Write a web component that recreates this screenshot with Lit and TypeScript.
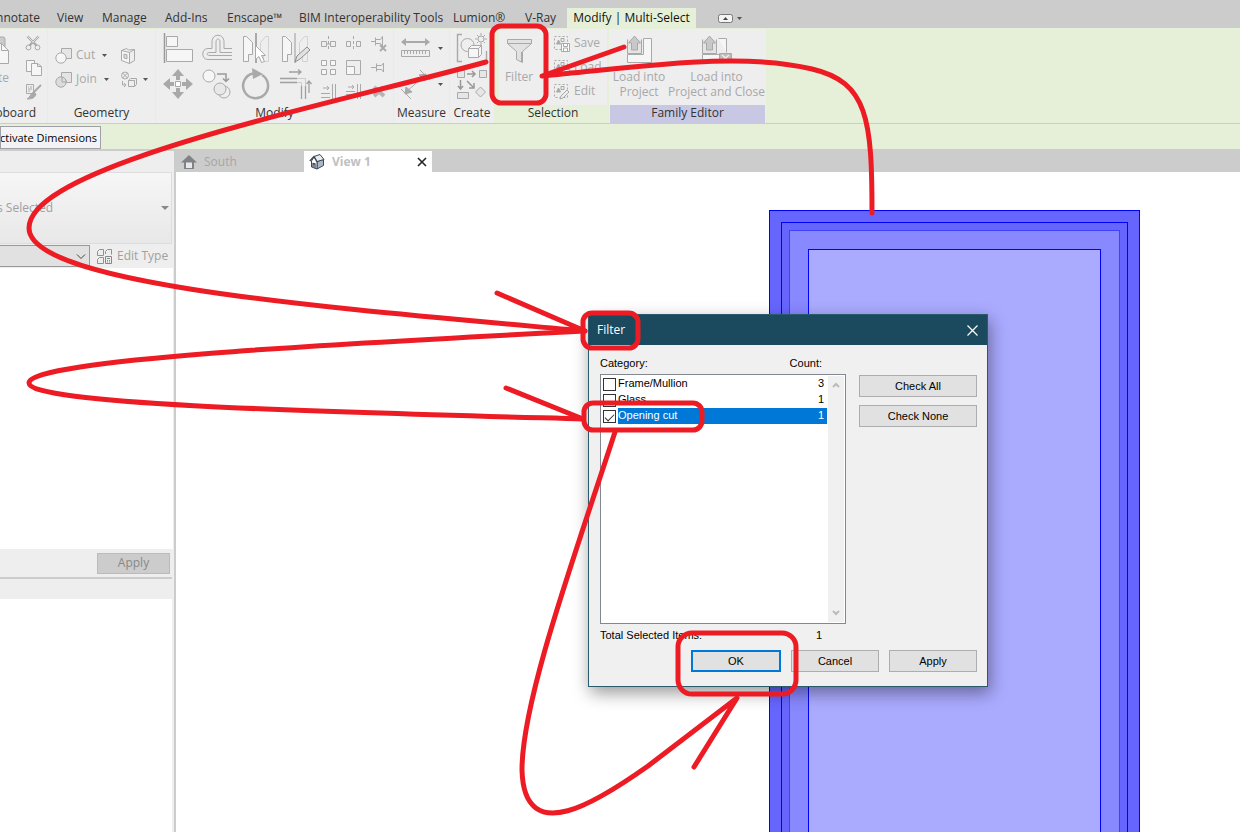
import { LitElement, html, css, svg } from "lit";
import { customElement } from "lit/decorators.js";

const G = "#a9a9a9";
const icon = (w: number, h: number, body: unknown, cls = "") =>
  html`<svg class="ic ${cls}" width=${w} height=${h} viewBox="0 0 ${w} ${h}" fill="none" stroke=${G} aria-hidden="true">${body}</svg>`;

const caret = html`<svg class="ic" width="5" height="3" viewBox="0 0 5 3" aria-hidden="true"><path d="M0 0h5L2.500 3z" fill="#555"/></svg>`;

const paper = "#f6f6f6";
const I = {
  paste: icon(28, 32, svg`<rect x="4" y="4" width="20" height="22" rx="2" fill="#ccc"/><path d="M12.500 10.500h8l7 7v13h-15z" fill="${paper}"/><path d="M20.500 10.500v7h7"/>`),
  scissors: icon(16, 16, svg`<path d="M2.500 1.500l9 9M13.500 1.500l-9 9" stroke-width="2.400"/><path d="M2.500 1.500l6 6M13.500 1.500l-6 6" stroke="#eee" stroke-width=".8"/><circle cx="3.500" cy="12.500" r="2.400"/><circle cx="12.500" cy="12.500" r="2.400"/>`),
  copy: icon(17, 17, svg`<path d="M1.500 1.500h8v11h-8z" fill="${paper}"/><path d="M6.500 4.500h6l4 3v9h-10z" fill="${paper}"/><path d="M12.500 4.500v3h4"/>`),
  match: icon(17, 17, svg`<path d="M1.500 1.500h7v9h-7z"/><path d="M3 4h1M5 4h2M3 6h4M3 8h2"/><path d="M16 2l-7 7" stroke-width="2"/><path d="M9 9c-4 1-3 5-7 7 5 0 8-1 9-5z" fill="${G}"/>`),
  cut: icon(17, 17, svg`<path d="M6.500 1.500h10v10h-10z" fill="#e6e6e6"/><circle cx="6" cy="11" r="5.200" fill="${paper}"/>`),
  join: icon(17, 17, svg`<path d="M6.500 1.500h10v10h-5a5 5 0 0 0-5-5z" fill="#e4e4e4"/><circle cx="6" cy="11" r="5.200" fill="#dcdcdc"/><path d="M7 6v5h5"/>`),
  wall: icon(16, 17, svg`<path d="M1.500 3.500l8 2v11l-8-3z" fill="${paper}"/><path d="M9.500 5.500l5-3v11l-5 3M1.500 3.500l5-2 2 1.500 6-.5"/><path d="M4 7l3 .8v4L4 11z" fill="#ddd"/>`),
  demolish: icon(17, 17, svg`<circle cx="5" cy="4.500" r="3.500"/><path d="M2.500 2l5 5M7.500 2l-5 5M8.500 9.500h6v6h-6zM8.500 9.500l2-2h6v6l-2 2M2.500 10v4h3M4 12l2 2-2 2"/>`),
  align: icon(32, 32, svg`<path d="M2.500 1v30" stroke-width="1.500" stroke="#999"/><path d="M4.500 4.500h11v10h-11zM4.500 17.500h26v12h-26z" fill="${paper}"/>`),
  offset: icon(32, 32, svg`<path d="M31 27.500H7c-7 0-7-11 0-11h4V10c0-9 12-9 12 0v6.500h8"/><path d="M31 23.500H9c-4 0-4-3 0-3h6V10c0-4 4-4 4 0v10.500h12"/>`),
  mirror: icon(32, 32, svg`<path d="M3.500 4.500h3l6 6v12h-4v7h-5z" fill="${paper}"/><path d="M28.500 4.500h-3l-5 6v12h3v7h5z" stroke="#d2d2d2"/><path d="M16 1v30" stroke-width="2"/><path d="M15.500 13.500v14l3.500-3 2.500 6 3-1-3-6h4z" fill="#fff"/>`),
  mirrorDraw: icon(32, 32, svg`<path d="M3.500 4.500h3l6 6v12h-4v7h-5z" fill="${paper}"/><path d="M28.500 4.500h-3l-5 6v12h3v7h5z" stroke="#d2d2d2"/><path d="M16 1v30" stroke-width="2" stroke="#c4c4c4"/><path d="M16 30l2-6 10-9 3 3-10 9z" fill="#e2e2e2" stroke="#8c8c8c"/>`),
  move: icon(32, 32, svg`<path d="M16 1l6 7h-4v4h-4V8h-4zM16 31l6-7h-4v-4h-4v4h-4zM1 16l7-6v4h4v4H8v4zM31 16l-7-6v4h-4v4h4v4z" fill="${G}" stroke="none"/><path d="M13.500 13.500h5v5h-5z" fill="#fff"/>`),
  copyTool: icon(32, 32, svg`<circle cx="8" cy="8" r="6" fill="${paper}"/><path d="M16 6h9v7M22 10.500l3 3 3-3" stroke="#999" stroke-width="1.500"/><circle cx="23" cy="24" r="6"/><circle cx="19" cy="21" r="6" fill="#e8e8e8"/>`),
  rotate: icon(32, 32, svg`<path d="M22 7A12.500 12.500 0 1 1 13 5.500" stroke-width="2.500"/><path d="M12 0l11 6-10 5z" fill="${G}" stroke="none"/>`),
  trim: icon(32, 32, svg`<path d="M1 10.500h17M1 14.500h17M22.500 18v13M26.500 18v13M10 4h12M19 1.500l3 2.500-3 2.500M30 25V13M27.500 16l2.500-3 2.500 3" stroke="#a0a0a0" stroke-width="1.300"/><path d="M18 10.500h8.500V18M18 14.500h4.500V18" stroke="#ccc"/>`),
  split: icon(17, 17, svg`<path d="M1.500 6.500h5v5h-5zM10.500 6.500h5v5h-5zM6.500 9h4"/><path d="M8.500 1v15" stroke-dasharray="3 2"/>`),
  splitGap: icon(17, 17, svg`<path d="M1.500 6.500h4v5h-4zM11.500 6.500h4v5h-4z"/><path d="M8.500 1v15" stroke-dasharray="3 2"/>`),
  unpin: icon(17, 17, svg`<path d="M1 6.500h4M5.500 2.500v8M5.500 4.500h5l2-3v10l-2-3h-5"/><path d="M10 10l6 6M16 10l-6 6" stroke-width="1.800"/>`),
  array: icon(17, 17, svg`<path d="M1.500 1.500h5v5h-5zM10.500 1.500h5v5h-5zM1.500 10.500h5v5h-5zM10.500 10.500h5v5h-5z" fill="${paper}"/>`),
  scale: icon(17, 17, svg`<path d="M1.500 7V1.500h14v14H10"/><path d="M1.500 7.500h8v8h-8z" fill="${paper}"/>`),
  pin: icon(17, 17, svg`<path d="M1 8.500h5M6.500 4.500v8M6.500 6.500h5l2-2.500v9l-2-2.500h-5"/>`),
  extend: icon(17, 17, svg`<path d="M1 10.500h9M1 14.500h9M12.500 1v15M15.500 1v15M3 5h6M7 3l2 2-2 2"/>`),
  extendMulti: icon(17, 17, svg`<path d="M1 8.500h9M1 11.500h9M1 14.500h9M12.500 1v15M15.500 1v15M3 4h6M7 2l2 2-2 2"/>`),
  del: icon(17, 17, svg`<path d="M4 4l10 9M14 4L4 13" stroke-width="4" stroke="#b4b4b4"/>`),
  measure: icon(31, 20, svg`<path d="M2 4h27" stroke-width="2"/><path d="M1 4l5-4v8zM30 4l-5-4v8z" fill="${G}" stroke="none"/><path d="M1.500 12.500h28v6h-28z"/><path d="M4.500 13v3M7.500 13v3M10.500 13v3M13.500 13v3M16.500 13v3M19.500 13v3M22.500 13v3M25.500 13v3"/>`),
  dimension: icon(31, 31, svg`<path d="M1 20l10 10M20 1l10 10M5 24L25 6" /><path d="M5 25l1-7 6 5zM26 5l-7 1 6 6z" fill="${G}"/>`),
  group: icon(32, 30, svg`<path d="M6 1.500H1.500v27H6M26 28.500h4.500V18" stroke-width="1.400"/><circle cx="11.500" cy="12" r="6.500"/><path d="M12.500 15.500l3-3h10v9l-3 3h-10z" fill="${paper}"/><path d="M12.500 15.500h10v9M22.500 15.500l3-3"/><circle cx="25" cy="6" r="3"/><path d="M25 0v12M19 6h12M21 2l8 8M29 2l-8 8" stroke-dasharray="2.500 7"/>`),
  assembly: icon(32, 32, svg`<path d="M1.500 2.500h7v7h-7zM23.500 2.500h7v7h-7zM1.500 24.500h11v6h-11zM24.500 19l5 5-5 5-5-5z" fill="#e6e6e6"/><path d="M11 6h8M16 3l3 3-3 3M4.500 12v9M2 18l2.500 3L7 18M11 13l7 7M18 15v5h-5" stroke="#999" stroke-width="1.500"/>`),
  filter: icon(27, 26, svg`<path d="M1.500 1.500h24v4l-9 8v11l-6-3v-8l-9-8z" fill="#e2e2e2"/><path d="M1.500 5.500h24M15.500 14v10" />`),
  save: icon(17, 17, svg`<path d="M1.500 1.500h13v13h-13z" stroke-dasharray="2 2"/><path d="M8 3.500h3v3H8z"/><path d="M3.500 9l2-4 2 4z" fill="${G}"/><path d="M8.500 8.500h8v8h-8z" fill="#fff"/><path d="M10.500 8.500v3h4v-3M10.500 16v-3h4v3"/>`),
  load: icon(17, 17, svg`<path d="M1.500 1.500h13v13h-13z" stroke-dasharray="2 2"/><path d="M8 3.500h3v3H8z"/><path d="M3.500 9l2-4 2 4z" fill="${G}"/><path d="M7.500 9.500h3l1 1h5v6h-9z" fill="#fff"/>`),
  edit: icon(17, 17, svg`<path d="M1.500 1.500h13v13h-13z" stroke-dasharray="2 2"/><path d="M8 3.500h3v3H8z"/><path d="M3.500 9l2-4 2 4z" fill="${G}"/><path d="M7 16l1-3 6-6 2 2-6 6z" fill="#eee"/>`),
  toProject: icon(27, 28, svg`<path d="M17.500 3.500h8v24h-24v-8h16z" fill="${paper}"/><path d="M1.500 4.500v14h14v-14" fill="#e4e4e4"/><path d="M8.500 1l6 7h-3v7h-6V8h-3z" fill="#c8c8c8"/>`),
  toProjectClose: icon(32, 28, svg`<path d="M17.500 3.500h8v14M1.500 19.500v8h17v-8z" fill="${paper}"/><path d="M1.500 4.500v14h14v-14" fill="#e4e4e4"/><path d="M8.500 1l6 7h-3v7h-6V8h-3z" fill="#c8c8c8"/><path d="M18.500 18.500h12v9h-12z" fill="#bcbcbc"/><path d="M21 20l7 6M28 20l-7 6" stroke="#eee" stroke-width="1.500"/>`),
  editType: icon(17, 17, svg`<path d="M3.500 1.500h4v6h-6v-4zM11.500 1.500h4v5M9.500 6V3.500l2-2M3.500 9.500h4v6h-6v-4z" stroke="#909090"/><path d="M9.500 8.500h6v7h-6z" stroke="#888"/><path d="M11 10.500h3M11 12.500h1M13 12.500h1M11 14h1M13 14h1" stroke="#888"/>`),
  home: html`<svg class="ic" width="16" height="15" viewBox="0 0 16 15" aria-hidden="true"><path d="M8 0l8 7.500h-3V14H3V7.500H0z" fill="#808285"/><path d="M5 7.500h6v5.500H5z" fill="#e6e8ea"/></svg>`,
  view3d: html`<svg class="ic" width="16" height="16" viewBox="0 0 16 16" fill="#fff" stroke="#3d4755" stroke-linejoin="round" aria-hidden="true"><path d="M8 7.500l6.500-2v6L8 15z" fill="#a9b8c8"/><path d="M2.500 7v6L8 15V7L5 3z"/><path d="M5 2.500l6-2 4 5-7 2z" fill="#e8edf2"/><path d="M.8 7L5 2.500 8 8M4 13V9.500l2 .5v4" fill="none" stroke-width="1.300"/></svg>`,
};

@customElement("filter-dialog")
export class FilterDialog extends LitElement {
  rows = [
    { name: "Frame/Mullion", count: 3, on: false },
    { name: "Glass", count: 1, on: false },
    { name: "Opening cut", count: 1, on: true },
  ];
  static styles = css`
    :host { display: block; box-sizing: border-box; border: 1px solid #2a5a6b; background: #f0f0f0; color: #000;
      box-shadow: 2px 6px 16px rgba(0, 0, 0, .4); font: 11px/16px "Liberation Sans", sans-serif; }
    header { display: flex; align-items: center; justify-content: space-between; height: 30px; padding: 0 9px 0 8px;
      background: #1b4a5e; color: #fff; }
    h2 { margin: 0; font: 12px/16px "Open Sans", "Noto Sans", sans-serif; }
    button { font: inherit; color: inherit; padding: 0; height: 22px; background: #e1e1e1; border: 1px solid #adadad; }
    .close { display: grid; place-items: center; width: 12px; background: none; border: 0; }
    .body { display: grid; grid-template-columns: 1fr 118px; column-gap: 13px; padding: 10px 10px 14px 11px; }
    .heads { display: flex; justify-content: space-between; padding-right: 24px; margin-bottom: 3px; }
    .list { display: flex; box-sizing: border-box; height: 250px; border: 1px solid #828790; background: #fff; }
    .rows { flex: 1; padding: 1px 0 0 2px; }
    .row { display: flex; align-items: center; height: 16px; }
    .name { display: flex; flex: 1; justify-content: space-between; padding: 0 3px 0 0; margin: 0 1px 0 2px; height: 16px; line-height: 15px; }
    .sel .name { background: #0078d7; color: #fff; }
    input { appearance: none; display: grid; place-items: center; box-sizing: border-box; width: 13px; height: 13px; margin: 1px 0 0; border: 1px solid #333; background: #fff; }
    input:checked::after { content: ""; box-sizing: border-box; width: 9px; height: 5px; border: solid #333; border-width: 0 0 1px 1px; transform: rotate(-45deg); }
    .bar { display: flex; flex-direction: column; justify-content: space-between; align-items: center; box-sizing: border-box;
      width: 16px; margin: 1px 1px 1px 0; padding: 6px 0; background: #f0f0f0; }
    .side { display: flex; flex-direction: column; gap: 8px; padding-top: 20px; }
    .total { display: flex; justify-content: space-between; padding-right: 24px; margin: 3px 0 7px; }
    .foot { grid-column: 1 / -1; display: grid; grid-template-columns: 90px 88px 88px; justify-content: end; gap: 10px; }
    .ok { border: 2px solid #0078d7; }
  `;
  render() {
    const chev = (d: string) => html`<svg width="8" height="6" viewBox="0 0 8 6" fill="none" stroke="#bbb" stroke-width="2" aria-hidden="true"><path d=${d}/></svg>`;
    return html`
      <header><h2>Filter</h2>
        <button class="close" aria-label="Close"><svg width="11" height="11" viewBox="0 0 11 11" stroke="#fff" stroke-width="1.200"><path d="M.5 .5l10 10M10.500 .5l-10 10"/></svg></button>
      </header>
      <div class="body">
        <div>
          <div class="heads"><span>Category:</span><span>Count:</span></div>
          <div class="list">
            <div class="rows">${this.rows.map((r, i) => html`
              <div class="row ${r.on ? "sel" : ""}"><input type="checkbox" id="r${i}" .checked=${r.on}>
                <label class="name" for="r${i}"><span>${r.name}</span><span>${r.count}</span></label></div>`)}
            </div>
            <div class="bar">${chev("M1 5l3-3 3 3")}${chev("M1 1l3 3 3-3")}</div>
          </div>
          <div class="total"><span>Total Selected Items:</span><span>1</span></div>
        </div>
        <div class="side"><button>Check All</button><button>Check None</button></div>
        <div class="foot"><button class="ok">OK</button><button>Cancel</button><button>Apply</button></div>
      </div>`;
  }
}

@customElement("app-root")
export class AppRoot extends LitElement {
  static styles = css`
    :host { display: flex; flex-direction: column; position: relative; height: 100vh; overflow: hidden; background: #fff;
      color: #333; font: 12px/16px "Open Sans", "Noto Sans", sans-serif; }
    .ic { display: block; flex: none; overflow: visible; }
    button { display: flex; align-items: center; padding: 0; border: 0; background: none; font: inherit; color: inherit; }
    .tabs { display: grid; grid-template-columns: 57px 45px 63px 62px 72px 154px 72px 42px 129px 1fr; align-items: end; height: 28px; background: #ccc; }
    .tabs a { box-sizing: border-box; height: 20px; line-height: 20px; color: #333; text-decoration: none; white-space: nowrap; }
    .cut { display: flex; justify-content: flex-end; overflow: hidden; }
    .tabs .first { width: 40px; }
    .tabs .on { background: #e6f0d8; text-align: center; color: #111; }
    .mini { gap: 4px; height: 20px; margin-left: 22px; }
    .ribbon { display: flex; height: 94px; padding-top: 1px; background: #e6f0d8; border-bottom: 1px solid #ccc; }
    .grp { display: flex; flex-direction: column; flex: none; box-sizing: border-box; margin-right: 1px; background: #eee; }
    .grp h3 { margin: 0; height: 18px; font: inherit; text-align: center; white-space: nowrap; }
    .in { flex: 1; display: flex; color: #a8a8a8; }
    .clip { width: 47px; } .geo { width: 107px; } .mod { width: 237px; } .mea { width: 55px; } .cre { width: 44px; margin-right: 5px; }
    .clip h3 { width: 36px; }
    .sel { width: 108px; margin-right: 2px; } .sel h3 { background: #e6f0d8; }
    .fam { width: 157px; } .fam h3 { background: #c8c8e4; margin: 0 1px; }
    .paste { flex-direction: column; justify-content: space-between; align-items: flex-end; width: 9px; padding: 4px 0 19px; margin-right: 16px; overflow: hidden; box-sizing: border-box; }
    .col { display: grid; grid-auto-rows: 24px; align-items: center; padding-top: 2px; align-content: start; }
    .gcol { padding: 14px 0 0 7px; width: 57px; margin-right: 8px; }
    .gcol button { gap: 4px; } .gcol2 button { gap: 6px; } .gcol .ic:last-child { margin-left: 3px; }
    .gcol2 { padding-top: 14px; }
    .big { display: grid; grid-template: repeat(2, 36px) / repeat(4, 39px); place-items: center; padding: 1px 2px; align-content: start; }
    .small { display: grid; grid-template: repeat(3, 24px) / repeat(3, 25px); place-items: center; padding-top: 2px; align-content: start; }
    .two { display: grid; grid-auto-rows: 36px; align-items: center; align-content: start; padding: 1px 6px; }
    .two button { gap: 7px; }
    .stack { flex-direction: column; text-align: center; line-height: 15px; justify-content: flex-start; }
    .flt { width: 40px; gap: 5px; padding-top: 9px; margin-right: 14px; }
    .sel .col button { gap: 4px; }
    .ld { gap: 6px; padding-top: 6px; } .ld1 { width: 60px; } .ld2 { width: 95px; white-space: nowrap; }
    .options { display: flex; height: 27px; background: #e6f0d8; border-bottom: 2px solid #ccc; box-sizing: border-box; }
    .act { box-sizing: border-box; width: 101px; height: 23px; margin-top: 2px; padding-right: 3px; border: 1px solid #a0a0a8; background: #f3f3f6; color: #000; font-size: 11px; white-space: nowrap; }
    .main { flex: 1; display: flex; min-height: 0; }
    aside { display: flex; flex-direction: column; box-sizing: border-box; padding-right: 2px; flex: none; background: #eee; border-right: 2px solid #ccc; width: 176px; color: #a0a0a0; }
    .type { box-sizing: border-box; width: 172px; height: 72px; margin-top: 21px; justify-content: space-between; padding-right: 2px; border: 1px solid #ddd; border-left: 0; background: linear-gradient(#f6f6f6, #e8e8e8); }
    .type span { width: 53px; white-space: nowrap; }
    .pick { display: flex; height: 24px; gap: 6px; align-items: center; }
    .drop { display: grid; align-items: center; justify-items: end; padding-right: 0; }
    .drop > * { grid-area: 1 / 1; }
    .drop .ic { margin-right: 5px; pointer-events: none; }
    .pick select { appearance: none; box-sizing: border-box; width: 90px; height: 22px; border: 1px solid #999; border-left: 0; background: #e1e1e1; }
    .pick button { gap: 4px; }
    .sheet { background: #fff; height: 281px; margin-right: -1px; }
    .applyrow { display: flex; justify-content: flex-end; align-items: center; height: 28px; padding-right: 2px; }
    .applyrow button { width: 73px; height: 21px; box-sizing: border-box; justify-content: center; background: #ccc; border: 1px solid #bbb; color: #888; }
    .head { height: 20px; border-top: 2px solid #ccc; }
    .rest { flex: 1; background: #fff; }
    .view { flex: 1; display: flex; flex-direction: column; min-width: 0; }
    .vtabs { display: flex; height: 21px; background: #ccc; color: #a6a6a6; }
    .vtab { display: flex; align-items: center; gap: 7px; box-sizing: border-box; width: 128px; padding: 1px 5px 0; }
    .vtab a { flex: 1; color: inherit; text-decoration: none; }
    .vtab.on { background: #fff; font-weight: 700; color: #c0c0c0; }
    .canvas { flex: 1; display: flex; justify-content: flex-end; padding: 38px 100px 0 0; min-height: 0; }
    .f { display: flex; box-sizing: border-box; border: 1px solid #00f; border-bottom: 0; flex: 1; }
    .f1 { flex: none; width: 371px; padding: 11px 11px 0; background: #66f; }
    .f2 { padding: 7px 7px 0; } .f3 { padding: 18px 18px 0; background: #88f; border-color: #4040ff; } .f4 { background: #aaf; }
    filter-dialog { position: absolute; left: 588px; top: 314px; width: 400px; }
    .ink { position: absolute; left: 0; top: 0; pointer-events: none; }
  `;
  render() {
    return html`
      <nav class="tabs">
        <a class="cut first" href="#">Annotate</a>
        ${["View", "Manage", "Add-Ins", "Enscape™", "BIM Interoperability Tools", "Lumion®", "V-Ray"].map((t) => html`<a href="#">${t}</a>`)}
        <a class="on" href="#">Modify | Multi-Select</a>
        <button class="mini" aria-label="Ribbon display"><svg class="ic" width="15" height="9" viewBox="0 0 15 9"><rect x=".5" y=".5" width="14" height="8" rx="2" fill="#f4f4f4" stroke="#777"/><path d="M5 6h5L7.500 3z" fill="#444"/></svg>${caret}</button>
      </nav>
      <div class="ribbon">
        <section class="grp clip"><div class="in"><button class="cut paste">${I.paste}<span>Paste</span></button>
          <div class="col">${I.scissors}${I.copy}${I.match}</div></div><h3 class="cut">Clipboard</h3></section>
        <section class="grp geo"><div class="in">
          <div class="col gcol"><button>${I.cut}<span>Cut</span>${caret}</button><button>${I.join}<span>Join</span>${caret}</button></div>
          <div class="col gcol2"><button aria-label="Wall joins">${I.wall}</button><button aria-label="Demolish">${I.demolish}${caret}</button></div></div><h3>Geometry</h3></section>
        <section class="grp mod"><div class="in">
          <div class="big">${I.align}${I.offset}${I.mirror}${I.mirrorDraw}${I.move}${I.copyTool}${I.rotate}${I.trim}</div>
          <div class="small">${I.split}${I.splitGap}${I.unpin}${I.array}${I.scale}${I.pin}${I.extend}${I.extendMulti}${I.del}</div></div><h3>Modify</h3></section>
        <section class="grp mea"><div class="in two"><button aria-label="Measure between">${I.measure}${caret}</button><button aria-label="Dimension">${I.dimension}${caret}</button></div><h3>Measure</h3></section>
        <section class="grp cre"><div class="in two"><button aria-label="Create group">${I.group}</button><button aria-label="Create assembly">${I.assembly}</button></div><h3>Create</h3></section>
        <section class="grp sel"><div class="in"><button class="stack flt">${I.filter}<span>Filter</span></button>
          <div class="col"><button>${I.save}Save</button><button>${I.load}Load</button><button>${I.edit}Edit</button></div></div><h3>Selection</h3></section>
        <section class="grp fam"><div class="in"><button class="stack ld ld1">${I.toProject}<span>Load into<br>Project</span></button>
          <button class="stack ld ld2">${I.toProjectClose}<span>Load into<br>Project and Close</span></button></div><h3>Family Editor</h3></section>
      </div>
      <div class="options"><button class="cut act">Activate Dimensions</button></div>
      <div class="main">
        <aside>
          <button class="type"><span class="cut">Multiple Categories Selected</span><svg class="ic" width="8" height="4" viewBox="0 0 8 4"><path d="M0 0h8L4 4z" fill="#888"/></svg></button>
          <div class="pick"><div class="drop"><select aria-label="Category"><option></option></select>
            <svg class="ic" width="8" height="5" viewBox="0 0 8 5" fill="none" stroke="#444" aria-hidden="true"><path d="M0 .5l4 4 4-4"/></svg></div><button>${I.editType}Edit Type</button></div>
          <div class="sheet"></div>
          <div class="applyrow"><button>Apply</button></div>
          <div class="head"></div><div class="rest"></div>
        </aside>
        <div class="view">
          <div class="vtabs"><div class="vtab">${I.home}<a href="#">South</a></div>
            <div class="vtab on">${I.view3d}<a href="#">View 1</a><button aria-label="Close view"><svg class="ic" width="10" height="10" viewBox="0 0 10 10" stroke="#222" stroke-width="1.600"><path d="M1 1l8 8M9 1L1 9"/></svg></button></div></div>
          <div class="canvas"><div class="f f1"><div class="f f2"><div class="f f3"><div class="f f4"></div></div></div></div></div>
        </div>
      </div>
      <filter-dialog></filter-dialog>
      <svg class="ink" width="1240" height="832" viewBox="0 0 1240 832" fill="none" stroke="#ed1c24" stroke-width="5" stroke-linecap="round" stroke-linejoin="round" aria-hidden="true">
        <rect x="492" y="26" width="54" height="77" rx="9"/>
        <path d="M872 213C872 120 868 82 812 69C740 52 650 66 542 76L624 47"/>
        <path d="M486 62C330 105 29 165 29 228C29 285 330 308 585 331L497 293"/>
        <path d="M585 331C330 344 29 360 29 383C29 405 330 412 583 419L506 388"/>
        <rect x="583" y="313" width="55" height="35" rx="9"/>
        <rect x="584" y="403" width="118" height="27" rx="9"/>
        <path d="M615 432C575 555 522 700 522 770C524 850 600 800 648 766L737 698L694 767"/>
        <rect x="678" y="633" width="118" height="61" rx="14"/>
      </svg>`;
  }
}
